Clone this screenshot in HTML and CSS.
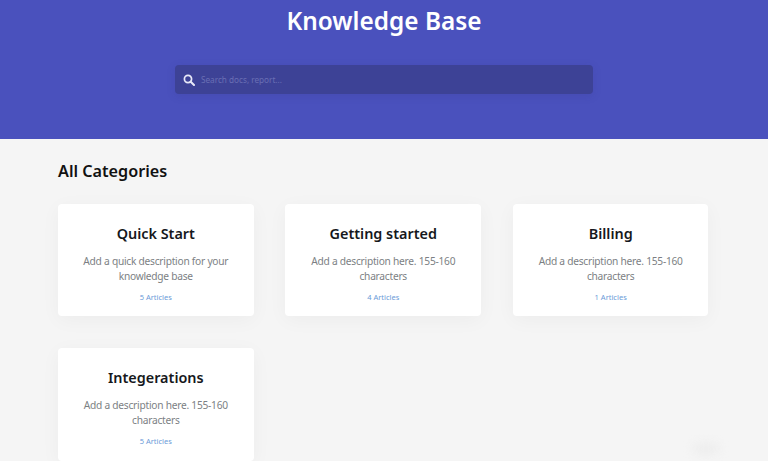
FILE: index.html
```html
<!DOCTYPE html>
<html lang="en">
<head>
<meta charset="utf-8">
<title>Knowledge Base</title>
<link rel="stylesheet" href="styles.css">
</head>
<body>
<header class="hero">
  <h1 class="hero-title">Knowledge Base</h1>
  <div class="search">
    <svg class="search-icon" viewBox="0 0 12 12" width="12" height="12" aria-hidden="true"><circle cx="5" cy="5" r="3.6" fill="none" stroke="currentColor" stroke-width="1.7"/><path d="M7.7 7.7 11 11" stroke="currentColor" stroke-width="2" stroke-linecap="round"/></svg>
    <span class="search-text">Search docs, report...</span>
  </div>
</header>
<main class="content">
  <h2 class="section-title">All Categories</h2>
  <div class="grid">
    <a class="card"><h3 class="card-title">Quick Start</h3><p class="card-text">Add a quick description for your knowledge base</p><span class="card-count">5 Articles</span></a>
    <a class="card"><h3 class="card-title">Getting started</h3><p class="card-text">Add a description here. 155-160 characters</p><span class="card-count">4 Articles</span></a>
    <a class="card"><h3 class="card-title">Billing</h3><p class="card-text">Add a description here. 155-160 characters</p><span class="card-count">1 Articles</span></a>
    <a class="card"><h3 class="card-title">Integerations</h3><p class="card-text">Add a description here. 155-160 characters</p><span class="card-count">5 Articles</span></a>
  </div>
</main>
<div class="smudge"></div>
</body>
</html>
```
FILE: styles.css
```css
* { box-sizing: border-box; }
html, body { margin: 0; height: 461px; overflow: hidden; }
body { background: #f5f5f5; font-family: "Noto Sans", "Open Sans", sans-serif; position: relative; }
.hero { height: 139px; background: #4a51bd; display: flex; flex-direction: column; align-items: center; }
.hero-title { margin: 0; height: 65px; padding-top: 3px; font-size: 24.4px; line-height: 36px; font-weight: 600; color: #fff; }
.search { width: 418px; height: 29px; background: #3d4296; border-radius: 4px; display: flex; align-items: center; gap: 6px; padding-left: 8px; box-shadow: 0 2px 8px rgba(50,50,120,.15); }
.search-icon { color: #e8e9f8; flex: none; }
.search-text { font-size: 8.2px; color: #6a6fb4; }
.content { padding: 18px 58px 0; }
.section-title { margin: 0; height: 46.5px; font-size: 16.2px; line-height: 28px; font-weight: 600; color: #111; }
.grid { display: grid; grid-template-columns: repeat(3, 195.6px); column-gap: 31.85px; row-gap: 32px; }
.card { height: 112.5px; background: #fff; border-radius: 4px; box-shadow: 0 4px 20px rgba(0,0,0,.04); padding: 18px 16px 0; text-align: center; display: block; }
.card-title { margin: 0 0 8px; font-size: 14.4px; line-height: 24px; font-weight: 600; color: #16181c; }
.card-text { margin: 0 0 8px; font-size: 10.2px; line-height: 15px; letter-spacing: -0.25px; color: #7c7f84; }
.card-count { display: block; font-size: 7.5px; line-height: 11px; color: #6b9bd8; }
.smudge { position: absolute; left: 692px; top: 442px; width: 28px; height: 14px; border-radius: 50%; background: #eeeeee; filter: blur(4px); }
```
